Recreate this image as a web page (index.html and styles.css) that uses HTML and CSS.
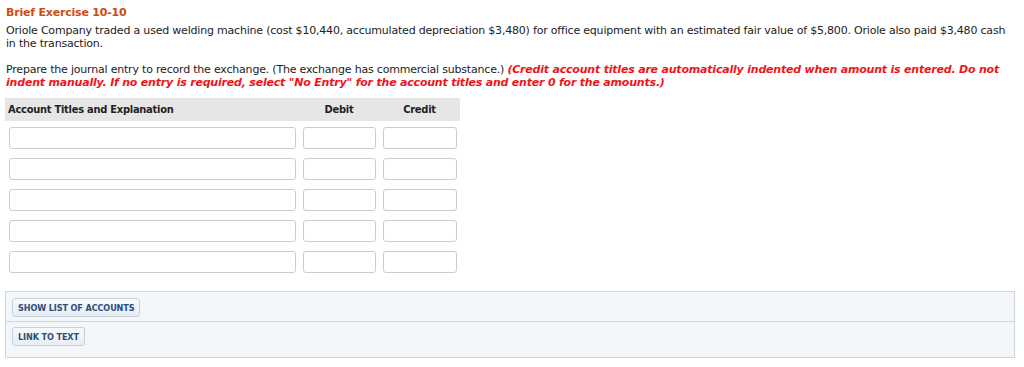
FILE: index.html
```html
<!DOCTYPE html>
<html lang="en">
<head>
  <meta charset="UTF-8">
  <title>Brief Exercise 10-10</title>
  <link rel="stylesheet" href="styles.css">
</head>
<body>

<div class="question">
  <h3 class="title">Brief Exercise 10-10</h3>
  <p class="text">Oriole Company traded a used welding machine (cost $10,440, accumulated depreciation $3,480) for office equipment with an estimated fair value of $5,800. Oriole also paid $3,480 cash in the transaction.</p>
  <p class="text">Prepare the journal entry to record the exchange. (The exchange has commercial substance.) <em class="note">(Credit account titles are automatically indented when amount is entered. Do not indent manually. If no entry is required, select "No Entry" for the account titles and enter 0 for the amounts.)</em></p>

  <div class="journal">
    <div class="journal-head">
      <div class="col-title">Account Titles and Explanation</div>
      <div class="col-num">Debit</div>
      <div class="col-num">Credit</div>
    </div>
    <div class="journal-row">
      <input type="text" class="in-title">
      <input type="text" class="in-num">
      <input type="text" class="in-num">
    </div>
    <div class="journal-row">
      <input type="text" class="in-title">
      <input type="text" class="in-num">
      <input type="text" class="in-num">
    </div>
    <div class="journal-row">
      <input type="text" class="in-title">
      <input type="text" class="in-num">
      <input type="text" class="in-num">
    </div>
    <div class="journal-row">
      <input type="text" class="in-title">
      <input type="text" class="in-num">
      <input type="text" class="in-num">
    </div>
    <div class="journal-row">
      <input type="text" class="in-title">
      <input type="text" class="in-num">
      <input type="text" class="in-num">
    </div>
  </div>

  <div class="tools">
    <div class="tools-row">
      <button type="button" class="tool-btn">Show List of Accounts</button>
    </div>
    <div class="tools-row last">
      <button type="button" class="tool-btn">Link to Text</button>
    </div>
  </div>
</div>

</body>
</html>
```

FILE: styles.css
```css
body {
  margin: 0;
  padding: 5px 9px 0 5px;
  font-family: "DejaVu Sans", Verdana, sans-serif;
  font-size: 11px;
  color: #222;
  background-color: #fff;
}
.title {
  margin: 0 0 0 1px;
  font-size: 11px;
  line-height: 16px;
  font-weight: bold;
  letter-spacing: -0.2px;
  color: #cc4c16;
}
.text {
  margin: 3px 0 0 1px;
  line-height: 13px;
  letter-spacing: -0.2px;
}
.text + .text {
  margin-top: 13px;
}
.note {
  color: #f0141a;
  font-weight: bold;
}
.journal {
  width: 455px;
  margin-top: 9px;
}
.journal-head,
.journal-row {
  display: grid;
  grid-template-columns: 294px 80px 81px;
}
.journal-head {
  background-color: #e6e6e6;
  height: 23px;
  align-items: center;
  font-family: "DejaVu Sans Condensed", "DejaVu Sans", sans-serif;
  font-size: 11px;
  font-weight: bold;
  letter-spacing: -0.25px;
}
.col-title {
  padding-left: 3px;
}
.col-num {
  text-align: center;
}
.journal-row {
  padding: 6px 0 3px;
}
.journal-row input {
  height: 22px;
  margin: 0 3px 0 4px;
  padding: 0 4px;
  box-sizing: border-box;
  border: 1px solid #cdcdcd;
  border-radius: 3px;
  background-color: #fff;
  min-width: 0;
}
.tools {
  margin-top: 15px;
  background-color: #f4f7fa;
  border: 1px solid #ccd5e0;
}
.tools-row {
  padding: 6px 6px 4px;
  border-bottom: 1px solid #ccd5e0;
}
.tools-row.last {
  padding: 5px 6px 11px;
  border-bottom: none;
}
.tool-btn {
  display: block;
  height: 19px;
  padding: 0 5px;
  font-family: "DejaVu Sans Condensed", "DejaVu Sans", sans-serif;
  font-size: 9px;
  font-weight: bold;
  letter-spacing: -0.1px;
  text-transform: uppercase;
  color: #2c4d7c;
  background: linear-gradient(#f7f9fb, #e8edf2);
  border: 1px solid #c6cfd9;
  border-radius: 3px;
  cursor: pointer;
}
```
